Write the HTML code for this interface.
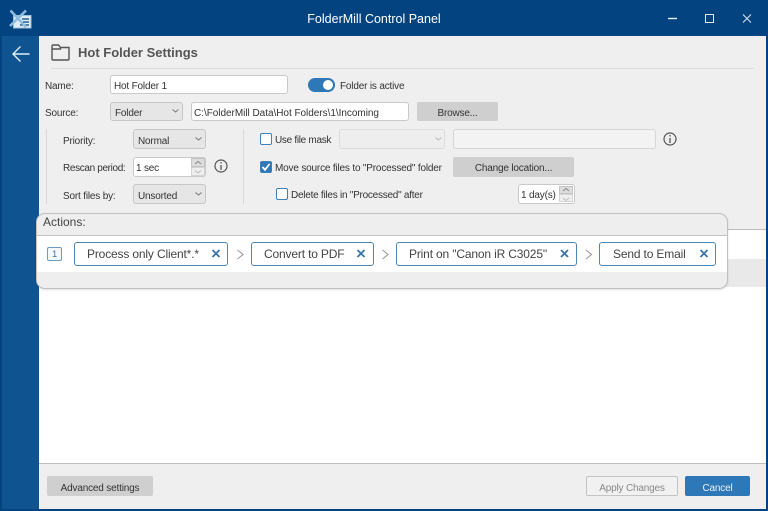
<!DOCTYPE html>
<html><head><meta charset="utf-8">
<style>
html,body{margin:0;padding:0;width:768px;height:511px;overflow:hidden;background:#fff}
body{position:relative;font-family:"Liberation Sans",sans-serif;font-size:10px;letter-spacing:-.18px;color:#333}
div,span{position:absolute;box-sizing:border-box;white-space:nowrap}
svg{position:absolute;overflow:visible}
.t{line-height:14px;height:14px;margin-top:2px}
.m{margin-top:3px}
.in{background:#fff;border:1px solid #c9c9c9;border-radius:3px;line-height:21px;padding-left:3px;color:#333}
.sel{background:#e6e6e6;border:1px solid #c6c6c6;border-radius:3px;line-height:21px;padding-left:4px;color:#333}
.btn{background:#cfcfcf;border-radius:2px;text-align:center;color:#333}
.chip{background:#fff;border:1px solid #4f86b5;border-radius:3px;height:24px;top:242px;font-size:12px;letter-spacing:-.16px;line-height:23px;color:#444}
.cb{width:12px;height:12px;border:1px solid #3d7fb8;border-radius:2px;background:#fff}
</style></head><body>
<div style="left:0;top:0;width:768px;height:511px;background:#03437f"></div>
<div style="left:2px;top:36px;width:37px;height:473px;background:#0f5490"></div>
<div style="left:39px;top:36px;width:727px;height:473px;background:#efefef"></div>
<div style="left:39px;top:229px;width:727px;height:235px;background:#fff;border-top:1px solid #bdbdbd;border-bottom:1px solid #bdbdbd"></div>
<div style="left:39px;top:259px;width:727px;height:28px;background:#e9e9e9"></div>

<svg style="left:9px;top:9px" width="24" height="21" viewBox="0 0 24 21" fill="none">
<rect x="4.500" y="6.500" width="17.500" height="12.500" fill="#dfebf5" stroke="#9dc0dc"/>
<path d="M13 10h7M14 13h6M11 16h9" stroke="#03437f" stroke-width="1.200"/>
<path d="M1.500 1.500L17 18" stroke="#8fbbdc" stroke-width="2.600"/>
<path d="M1 17L17 1.500" stroke="#8fbbdc" stroke-width="2.600"/>
</svg>
<div class="t" style="left:284px;top:11px;width:180px;text-align:center;color:#fff;font-size:12.500px;letter-spacing:0;line-height:17px;height:17px;margin:0">FolderMill Control Panel</div>
<svg style="left:660px;top:12px" width="100" height="14" fill="none" stroke="#fff">
<path d="M8 6.500H17" stroke-width="1.400" stroke="#e8eff5"/>
<rect x="45.500" y="2.500" width="8" height="8" stroke="#dbe6ef"/>
<path d="M83 2.500L91 10.500M91 2.500L83 10.500" stroke="#dbe6ef"/>
</svg>
<svg style="left:12px;top:46px" width="18" height="16" fill="none" stroke="#e4edf4" stroke-width="1.400">
<path d="M1 8H17.500M8.500 .5L1 8L8.500 15.500"/>
</svg>

<svg style="left:51px;top:44px" width="20" height="17" fill="none" stroke="#555" stroke-width="1.400">
<path d="M1 5V2.200Q1 1 2.200 1H7.500L9.500 3.500H18V15Q18 16 17 16H2Q1 16 1 15V5H9.500L9.500 3.500"/>
</svg>
<div class="t" style="left:78px;top:46px;font-size:13px;letter-spacing:0;font-weight:bold;color:#555;margin:0">Hot Folder Settings</div>
<div style="left:51px;top:68px;width:703px;height:1px;background:#dcdcdc"></div>

<div class="t" style="left:45px;top:78px">Name:</div>
<div class="in" style="left:110px;top:75px;width:178px;height:19px">Hot Folder 1</div>
<div style="left:308px;top:78px;width:27px;height:14px;border-radius:7px;background:#2f78b7"></div>
<div style="left:323px;top:80px;width:10px;height:10px;border-radius:5px;background:#fff"></div>
<div class="t" style="left:340px;top:78px">Folder is active</div>

<div class="t" style="left:45px;top:105px">Source:</div>
<div class="sel" style="left:110px;top:102px;width:73px;height:19px">Folder</div>
<svg style="left:172px;top:109px" width="7" height="4" fill="none" stroke="#777"><path d="M.5 .5L3.500 3L6.500 .5"/></svg>
<div class="in" style="left:191px;top:102px;width:218px;height:19px;padding-left:2px;letter-spacing:-.03px">C:\FolderMill Data\Hot Folders\1\Incoming</div>
<div class="btn" style="left:417px;top:102px;width:81px;height:19px;line-height:23px">Browse...</div>

<div style="left:46px;top:129px;width:1px;height:75px;background:#d8d8d8"></div>
<div style="left:243px;top:129px;width:1px;height:75px;background:#d8d8d8"></div>

<div class="t m" style="left:63px;top:132px">Priority:</div>
<div class="sel" style="left:133px;top:129px;width:73px;height:20px;line-height:23px">Normal</div>
<svg style="left:195px;top:137px" width="7" height="4" fill="none" stroke="#777"><path d="M.5 .5L3.500 3L6.500 .5"/></svg>

<div class="t" style="left:63px;top:160px;letter-spacing:-.35px">Rescan period:</div>
<div class="in" style="left:133px;top:157px;width:73px;height:20px;line-height:22px;padding-left:2px">1 sec</div>
<div style="left:191px;top:158px;width:14px;height:9px;background:#ddd;border:1px solid #c4c4c4"></div>
<div style="left:191px;top:167px;width:14px;height:9px;background:#eee;border:1px solid #d4d4d4"></div>
<svg style="left:194px;top:160px" width="8" height="15" fill="none" stroke="#888"><path d="M1 4L4 1.500L7 4"/><path d="M1 10.500L4 13L7 10.500" stroke="#bbb"/></svg>
<svg style="left:214px;top:159px" width="14" height="14" fill="none" stroke="#555"><circle cx="7" cy="7" r="6" stroke-width="1.200"/><path d="M7 6V11" stroke-width="1.300"/><path d="M7 3V4.500" stroke-width="1.300"/></svg>

<div class="t m" style="left:63px;top:187px">Sort files by:</div>
<div class="sel" style="left:133px;top:184px;width:73px;height:20px;line-height:23px">Unsorted</div>
<svg style="left:195px;top:192px" width="7" height="4" fill="none" stroke="#777"><path d="M.5 .5L3.500 3L6.500 .5"/></svg>

<div class="cb" style="left:260px;top:133px"></div>
<div class="t" style="left:275px;top:132px;letter-spacing:-.3px">Use file mask</div>
<div style="left:339px;top:129px;width:106px;height:20px;background:#eee;border:1px solid #dcdcdc;border-radius:3px"></div>
<svg style="left:435px;top:137px" width="7" height="4" fill="none" stroke="#bbb"><path d="M.5 .5L3.500 3L6.500 .5"/></svg>
<div style="left:453px;top:129px;width:203px;height:20px;background:#f3f3f3;border:1px solid #d6d6d6;border-radius:3px"></div>
<svg style="left:663px;top:132px" width="14" height="14" fill="none" stroke="#555"><circle cx="7" cy="7" r="6" stroke-width="1.200"/><path d="M7 6V11" stroke-width="1.300"/><path d="M7 3V4.500" stroke-width="1.300"/></svg>

<div class="cb" style="left:260px;top:161px;background:#2f78b7"></div>
<svg style="left:260px;top:161px" width="12" height="12" fill="none" stroke="#fff" stroke-width="1.800"><path d="M2.500 6L5 8.800L9.500 3"/></svg>
<div class="t" style="left:275px;top:160px">Move source files to "Processed" folder</div>
<div class="btn" style="left:453px;top:157px;width:121px;height:20px;line-height:24px">Change location...</div>

<div class="cb" style="left:276px;top:188px"></div>
<div class="t" style="left:291px;top:187px;letter-spacing:-.25px">Delete files in "Processed" after</div>
<div class="in" style="left:518px;top:184px;width:57px;height:20px;line-height:22px;padding-left:2px">1 day(s)</div>
<div style="left:559px;top:186px;width:14px;height:8px;background:#ddd;border:1px solid #c4c4c4"></div>
<div style="left:559px;top:194px;width:14px;height:8px;background:#eee;border:1px solid #d4d4d4"></div>
<svg style="left:562px;top:187px" width="8" height="15" fill="none" stroke="#888"><path d="M1 4L4 1.500L7 4"/><path d="M1 11L4 13.500L7 11" stroke="#bbb"/></svg>

<div style="left:36px;top:213px;width:692px;height:76px;border-radius:9px;background:#eee;border:1px solid #c0c0c0;box-shadow:0 1px 2px rgba(0,0,0,.12)"></div>
<div style="left:37px;top:235px;width:690px;height:37px;background:#fff;border-top:1px solid #c4c4c4"></div>
<div class="t" style="left:43px;top:215px;font-size:12px;letter-spacing:0;line-height:15px;height:15px;color:#444;margin:0">Actions:</div>

<div style="left:47px;top:247px;width:15px;height:14px;border:1px solid #6a9cc6;border-radius:2px;background:#f4f8fb;text-align:center;line-height:12px;font-size:9px;color:#3b6f9d">1</div>

<div class="chip" style="left:74px;width:154px;padding-left:12px">Process only Client*.*</div>
<div class="chip" style="left:251px;width:123px;padding-left:12px">Convert to PDF</div>
<div class="chip" style="left:396px;width:181px;padding-left:12px">Print on "Canon iR C3025"</div>
<div class="chip" style="left:599px;width:117px;padding-left:13px">Send to Email</div>
<svg style="left:0;top:0" width="768" height="511" fill="none">
<g stroke="#3f78a8" stroke-width="1.900">
<path d="M212.500 250L219.500 257M219.500 250L212.500 257"/>
<path d="M357.500 250L364.500 257M364.500 250L357.500 257"/>
<path d="M561 250L568 257M568 250L561 257"/>
<path d="M700.500 250L707.500 257M707.500 250L700.500 257"/>
</g>
<g stroke="#999" stroke-width="1.100">
<path d="M237.500 250L243 254.500L237.500 259"/>
<path d="M382.500 250L388 254.500L382.500 259"/>
<path d="M586 250L591.500 254.500L586 259"/>
</g>
</svg>

<div class="btn" style="left:47px;top:476px;width:106px;height:20px;line-height:25px">Advanced settings</div>
<div class="btn" style="left:586px;top:476px;width:92px;height:20px;line-height:23px;background:#f1f1f1;border:1px solid #c4c4c4;color:#888">Apply Changes</div>
<div class="btn" style="left:685px;top:476px;width:65px;height:20px;line-height:25px;background:#2f78b7;color:#e8f1f8">Cancel</div>
</body></html>
